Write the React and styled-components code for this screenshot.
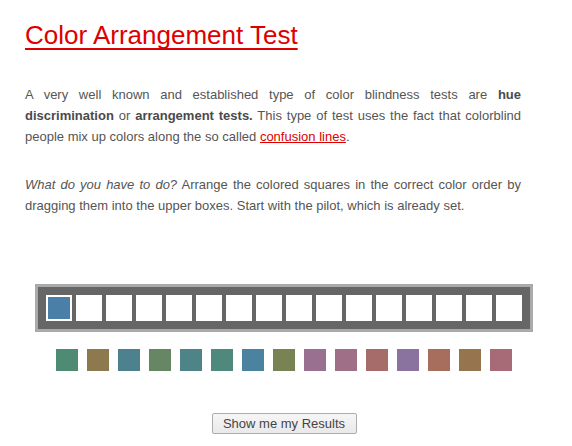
import styled, { createGlobalStyle } from "styled-components";

const GlobalStyle = createGlobalStyle`
  html, body {
    margin: 0;
    padding: 0;
    background: #fff;
  }
  body {
    font-family: "Liberation Sans", Arial, sans-serif;
  }
`;

const Page = styled.div`
  width: 568px;
`;

const Content = styled.div`
  padding: 0 0 0 25px;
  width: 496px;
`;

const Title = styled.h1`
  margin: 18px 0 0;
  font-size: 26px;
  line-height: 34px;
  font-weight: normal;
  color: #dd0000;
  text-decoration: underline;
  text-decoration-thickness: 2px;
  text-underline-offset: 4px;
  text-decoration-skip-ink: none;
`;

const Text = styled.p`
  margin: ${props => props.$top || 0}px 0 0;
  font-size: 13px;
  line-height: 21px;
  color: #555;
  text-align: justify;

  b {
    color: #4a4a4a;
  }
`;

const RedLink = styled.a`
  color: #dd0000;
  text-decoration: underline;
  text-decoration-skip-ink: none;
`;

const Game = styled.div`
  display: flex;
  flex-direction: column;
  align-items: center;
  margin-top: 68px;
`;

const Board = styled.div`
  display: flex;
  gap: 4px;
  padding: 8px;
  background: #666;
  border: 3px solid #aaa;
`;

const Slot = styled.div`
  width: 26px;
  height: 26px;
  box-sizing: border-box;
  background: ${props => props.$color || "#fff"};
  border: ${props => (props.$color ? "2px solid #fff" : "none")};
`;

const Palette = styled.div`
  display: flex;
  gap: 9px;
  margin-top: 17px;
`;

const Swatch = styled.div`
  width: 22px;
  height: 22px;
  background: ${props => props.$color};
  cursor: move;
`;

const ResultButton = styled.button`
  margin-top: 42px;
  width: 145px;
  height: 21px;
  padding: 0;
  font-family: "Liberation Sans", Arial, sans-serif;
  font-size: 13px;
  color: #444;
  background: linear-gradient(#f6f6f6, #e9e9e9);
  border: 1px solid #acacac;
  border-radius: 2px;
`;

const swatches = [
  "#4f8a72",
  "#8c7a4e",
  "#4d818e",
  "#678663",
  "#4e8387",
  "#4f887c",
  "#4a82a0",
  "#778353",
  "#9a7090",
  "#9e6f86",
  "#a66c6a",
  "#8b73a0",
  "#a76e5e",
  "#96744e",
  "#a66b77",
];

export default function App() {
  const slots = Array.from({ length: 16 }, (_, i) => (i === 0 ? "#4a80a8" : null));

  return (
    <>
      <GlobalStyle />
      <Page>
        <Content>
          <Title>Color Arrangement Test</Title>
          <Text $top={32}>
            A very well known and established type of color blindness tests are{" "}
            <b>hue discrimination</b> or <b>arrangement tests.</b> This type of test uses
            the fact that colorblind people mix up colors along the so called{" "}
            <RedLink href="#">confusion lines</RedLink>.
          </Text>
          <Text $top={27}>
            <i>What do you have to do?</i> Arrange the colored squares in the correct color
            order by dragging them into the upper boxes. Start with the pilot, which is
            already set.
          </Text>
        </Content>
        <Game>
          <Board>
            {slots.map((c, i) => (
              <Slot key={i} $color={c} />
            ))}
          </Board>
          <Palette>
            {swatches.map((c, i) => (
              <Swatch key={i} $color={c} />
            ))}
          </Palette>
          <ResultButton>Show me my Results</ResultButton>
        </Game>
      </Page>
    </>
  );
}
